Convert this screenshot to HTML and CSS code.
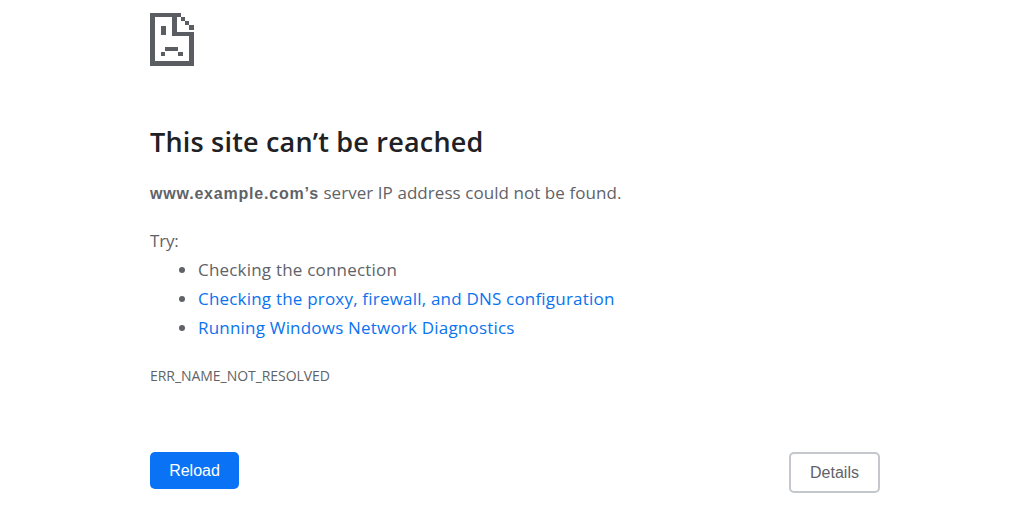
FILE: index.html
```html
<!DOCTYPE html>
<html lang="en">
<head>
    <meta charset="UTF-8">
    <meta name="viewport" content="width=device-width, initial-scale=1.0">
    <title>This site can't be reached</title>
    <link rel="stylesheet" href="styles.css">
</head>
<body>
    <div class="container">
        <svg class="sad-icon" width="44" height="53" viewBox="0 0 44 53" fill="#5a5d61">
            <path d="M0 0H31V4H5V48H39V23H44V53H0Z"/>
            <path d="M22 4H27V19H44V23H22Z"/>
            <rect x="31" y="4" width="4" height="4"/>
            <rect x="35" y="8" width="4" height="4"/>
            <rect x="39" y="12" width="5" height="5"/>
            <rect x="11" y="13" width="5" height="9"/>
            <rect x="15" y="34" width="13" height="4"/>
            <rect x="11" y="39" width="4" height="4"/>
            <rect x="28" y="39" width="5" height="4"/>
        </svg>

        <h1>This site can’t be reached</h1>

        <p class="summary"><strong>www.example.com’s</strong> server IP address could not be found.</p>

        <p class="try">Try:</p>
        <ul class="suggestions">
            <li>Checking the connection</li>
            <li><a href="#">Checking the proxy, firewall, and DNS configuration</a></li>
            <li><a href="#">Running Windows Network Diagnostics</a></li>
        </ul>

        <div class="error-code">ERR_NAME_NOT_RESOLVED</div>

        <div class="buttons">
            <button class="btn-reload">Reload</button>
            <button class="btn-details">Details</button>
        </div>
    </div>
</body>
</html>
```

FILE: styles.css
```css
body {
    font-family: "Open Sans", "Noto Sans", Arial, sans-serif;
    margin: 0;
    background-color: #fff;
    color: #5f6368;
}
.container {
    width: 730px;
    margin-left: 150px;
    padding-top: 13px;
}
.sad-icon {
    display: block;
}
h1 {
    font-size: 27px;
    font-weight: 600;
    line-height: 36px;
    color: #202124;
    margin: 58px 0 0;
    letter-spacing: 0.2px;
}
.summary {
    font-size: 17px;
    line-height: 24px;
    margin: 21px 0 0;
    letter-spacing: 0.06px;
}
.summary strong {
    font-family: "Liberation Sans", Arial, sans-serif;
    font-size: 16px;
    letter-spacing: 0.8px;
}
.try {
    font-size: 17px;
    line-height: 24px;
    margin: 23px 0 0;
    letter-spacing: -0.2px;
}
.suggestions {
    list-style: disc;
    margin: 2px 0 0;
    padding-left: 48px;
    font-size: 17px;
    line-height: 29px;
    letter-spacing: 0.2px;
}
.suggestions a {
    color: #0a73f0;
    text-decoration: none;
}
.error-code {
    font-size: 14px;
    line-height: 18px;
    margin-top: 25px;
    letter-spacing: -0.05px;
}
.buttons {
    display: flex;
    justify-content: space-between;
    align-items: flex-start;
    margin-top: 67px;
}
button {
    font-family: "Liberation Sans", Arial, sans-serif;
    font-size: 16px;
    border-radius: 5px;
    cursor: pointer;
}
.btn-reload {
    width: 89px;
    height: 37px;
    background-color: #0a73f5;
    color: white;
    border: none;
}
.btn-details {
    width: 91px;
    height: 41px;
    background: white;
    color: #5f6368;
    border: 2px solid #c4c7cc;
}
```
